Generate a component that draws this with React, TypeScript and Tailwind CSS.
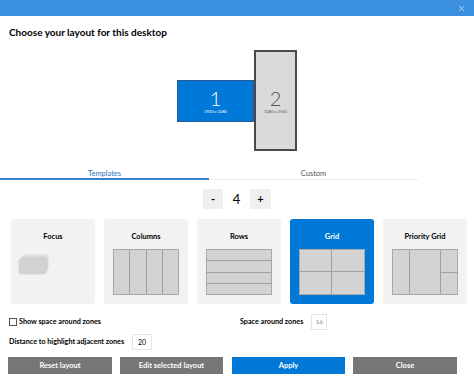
import { X } from "lucide-react";

const templates = ["Focus", "Columns", "Rows", "Grid", "Priority Grid"];

function Preview({ name }: { name: string }) {
  if (name === "Focus") {
    return (
      <div className="relative h-[46px] w-[66px] ml-[-2px]">
        <div className="absolute left-[4px] top-[6px] h-[15px] w-[25px] rounded-[2px] bg-[#e2e2e2] shadow-[0_0_2px_rgba(0,0,0,0.15)]" />
        <div className="absolute left-[2px] top-[8px] h-[15px] w-[26px] rounded-[2px] bg-[#d9d9d9] shadow-[0_0_2px_rgba(0,0,0,0.15)]" />
        <div className="absolute left-0 top-[10px] h-[15px] w-[27px] rounded-[2px] bg-[#d2d2d2] shadow-[0_0_2px_rgba(0,0,0,0.2)]" />
      </div>
    );
  }
  if (name === "Columns") {
    return (
      <div className="flex h-[46px] w-[66px] border border-[#a8a8a8] bg-[#d3d3d3]">
        {[0, 1, 2, 3].map((i) => (
          <div key={i} className={"flex-1 " + (i < 3 ? "border-r border-[#a0a0a0]" : "")} />
        ))}
      </div>
    );
  }
  if (name === "Rows") {
    return (
      <div className="flex h-[46px] w-[66px] flex-col border border-[#a8a8a8] bg-[#d3d3d3]">
        {[0, 1, 2, 3].map((i) => (
          <div key={i} className={"flex-1 " + (i < 3 ? "border-b border-[#a0a0a0]" : "")} />
        ))}
      </div>
    );
  }
  if (name === "Grid") {
    return (
      <div className="grid h-[46px] w-[66px] grid-cols-2 grid-rows-2 border border-[#a8a8a8] bg-[#d3d3d3]">
        <div className="border-r border-b border-[#a0a0a0]" />
        <div className="border-b border-[#a0a0a0]" />
        <div className="border-r border-[#a0a0a0]" />
        <div />
      </div>
    );
  }
  return (
    <div className="flex h-[46px] w-[66px] border border-[#a8a8a8] bg-[#d3d3d3]">
      <div className="w-[17px] border-r border-[#a0a0a0]" />
      <div className="flex-1 border-r border-[#a0a0a0]" />
      <div className="flex w-[16px] flex-col">
        <div className="flex-1 border-b border-[#a0a0a0]" />
        <div className="flex-1" />
      </div>
    </div>
  );
}

export default function App() {
  return (
    <div className="flex h-[382px] w-[474px] flex-col overflow-hidden bg-white font-['Lato',sans-serif] text-black">
      {/* title bar */}
      <div className="flex h-[16px] shrink-0 items-center justify-end bg-[#3b8fdf] pr-[8px]">
        <X className="h-[9px] w-[9px] text-[#d6e8fa]" strokeWidth={2} />
      </div>

      <h1 className="mt-[9px] pl-[9px] text-[10px] font-bold leading-[14px]">Choose your layout for this desktop</h1>

      {/* monitors */}
      <div className="mt-[11px] flex items-center justify-center">
        <div className="flex h-[42px] w-[77px] flex-col items-center justify-center border border-[#2a5a92] bg-[#0078d7] text-white">
          <span className="text-[20px] font-light leading-[22px]">1</span>
          <span className="whitespace-nowrap text-[4px] leading-[5px]">1920 x 1080</span>
        </div>
        <div className="flex h-[101px] w-[43px] flex-col items-center justify-center border-2 border-[#4a4a4a] bg-[#dadada] text-[#555]">
          <span className="text-[20px] font-light leading-[22px]">2</span>
          <span className="whitespace-nowrap text-[4px] leading-[5px]">1080 x 2560</span>
        </div>
      </div>

      {/* tabs */}
      <div className="mt-[15px] flex w-[418px]">
        <div className="flex h-[14px] w-[209px] items-end justify-center border-b-2 border-[#3a7fd0] text-[7.5px] leading-[9px] text-[#2f72c4]">Templates</div>
        <div className="flex h-[14px] w-[209px] items-end justify-center border-b border-[#ececec] pb-[1px] text-[7.5px] leading-[9px] text-[#555]">Custom</div>
      </div>

      {/* stepper */}
      <div className="mt-[9px] flex items-center justify-center">
        <div className="flex h-[20px] w-[20px] items-center justify-center bg-[#efefef] text-[11px] font-bold">-</div>
        <div className="w-[27px] text-center text-[13px] leading-[20px]">4</div>
        <div className="flex h-[20px] w-[21px] items-center justify-center bg-[#efefef] text-[11px] font-bold">+</div>
      </div>

      {/* templates */}
      <div className="mt-[10px] flex gap-[9px] pl-[11px]">
        {templates.map((t) => {
          const selected = t === "Grid";
          return (
            <div
              key={t}
              className={
                "flex h-[85px] w-[84px] flex-col items-center rounded-[3px] pt-[12px] " +
                (selected ? "bg-[#0078d7]" : "bg-[#f2f2f2]")
              }
            >
              <span className={"text-[7.5px] font-bold leading-[11px] " + (selected ? "text-white" : "text-black")}>{t}</span>
              <div className="mt-[7px]">
                <Preview name={t} />
              </div>
            </div>
          );
        })}
      </div>

      {/* options */}
      <div className="mt-[10px] flex h-[16px] items-center pl-[9px] text-[7.2px] font-bold">
        <label className="flex w-[231px] items-center gap-[2px]">
          <span className="h-[8px] w-[8px] border border-[#555] bg-white" />
          <span>Show space around zones</span>
        </label>
        <span>Space around zones</span>
        <div className="ml-[8px] flex h-[16px] w-[16px] items-center justify-center border border-[#e4e4e4] text-[6.5px] font-normal text-[#888]">16</div>
      </div>
      <div className="mt-[4px] flex h-[16px] items-center pl-[9px] text-[7.2px] font-bold">
        <span>Distance to highlight adjacent zones</span>
        <div className="ml-[8px] flex h-[16px] w-[20px] items-center justify-center border border-[#e4e4e4] text-[7px] font-normal">20</div>
      </div>

      {/* buttons */}
      <div className="mt-[7px] flex pl-[8px] text-[7.5px] font-bold text-white">
        <button className="h-[17px] w-[104px] bg-[#767676]">Reset layout</button>
        <button className="ml-[8px] h-[17px] w-[103px] bg-[#767676]">Edit selected layout</button>
        <button className="ml-[9px] h-[17px] w-[113px] bg-[#0078d7]">Apply</button>
        <button className="ml-[8px] h-[17px] w-[104px] bg-[#767676]">Close</button>
      </div>
    </div>
  );
}
